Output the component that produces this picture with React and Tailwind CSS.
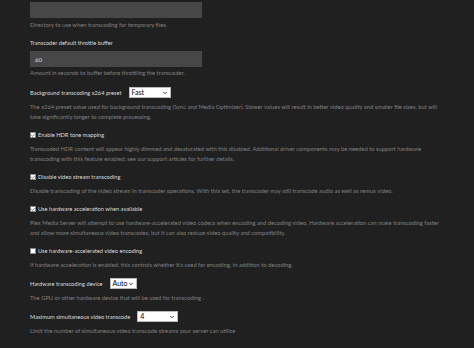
import { ChevronDown, Check } from "lucide-react";

const font = { fontFamily: 'Lato, "Noto Sans", sans-serif' };

function Select({ value, width }) {
  return (
    <div className={`ml-[7px] h-[11px] ${width} bg-white flex items-center justify-between px-[2px] border border-[#bbb]`}>
      <span className="text-[7px] leading-none text-black">{value}</span>
      <ChevronDown className="w-[6px] h-[6px] text-black" strokeWidth={3} />
    </div>
  );
}

function Box({ checked }) {
  return (
    <span className="w-[6px] h-[6px] mr-[2px] bg-white flex items-center justify-center border border-[#888]">
      {checked && <Check className="w-[5px] h-[5px] text-[#333]" strokeWidth={4} />}
    </span>
  );
}

function Desc({ children }) {
  return <p className="text-[5.8px] leading-[10px] text-[#808080]">{children}</p>;
}

function Label({ children }) {
  return <div className="text-[5.7px] leading-[10px] text-[#dcdcdc]">{children}</div>;
}

const checks = [
  {
    label: "Enable HDR tone mapping",
    checked: true,
    desc: "Transcoded HDR content will appear highly dimmed and desaturated with this disabled. Additional driver components may be needed to support hardware transcoding with this feature enabled; see our support articles for further details.",
  },
  {
    label: "Disable video stream transcoding",
    checked: true,
    desc: "Disable transcoding of the video stream in transcoder operations. With this set, the transcoder may still transcode audio as well as remux video.",
  },
  {
    label: "Use hardware acceleration when available",
    checked: true,
    desc: "Plex Media Server will attempt to use hardware-accelerated video codecs when encoding and decoding video. Hardware acceleration can make transcoding faster and allow more simultaneous video transcodes, but it can also reduce video quality and compatibility.",
  },
  {
    label: "Use hardware-accelerated video encoding",
    checked: false,
    desc: "If hardware acceleration is enabled, this controls whether it's used for encoding, in addition to decoding.",
  },
];

export default function App() {
  return (
    <div className="w-[474px] h-[348px] overflow-hidden bg-[#202020]" style={font}>
      <div className="pl-[30px] pr-[34px] pt-[2px]">
        <div className="w-[172px] h-[16px] bg-[#474747]" />
        <div className="mt-[2px]">
          <Desc>Directory to use when transcoding for temporary files.</Desc>
        </div>

        <div className="mt-[8px]">
          <Label>Transcoder default throttle buffer</Label>
          <div className="mt-[3px] w-[172px] h-[16px] bg-[#474747] flex items-center px-[5px]">
            <span className="text-[6px] text-[#ddd]">60</span>
          </div>
          <div className="mt-[1px]">
            <Desc>Amount in seconds to buffer before throttling the transcoder.</Desc>
          </div>
        </div>

        <div className="mt-[9px]">
          <div className="flex items-center h-[11px]">
            <Label>Background transcoding x264 preset</Label>
            <Select value="Fast" width="w-[42px]" />
          </div>
          <div className="mt-[4px]">
            <Desc>
              The x264 preset value used for background transcoding (Sync and Media Optimizer). Slower values will result in better video quality and smaller file sizes, but will take significantly longer to complete processing.
            </Desc>
          </div>
        </div>

        {checks.map((c, i) => (
          <div key={i} className="mt-[8px]">
            <div className="flex items-center">
              <Box checked={c.checked} />
              <Label>{c.label}</Label>
            </div>
            <div className="mt-[4px]">
              <Desc>{c.desc}</Desc>
            </div>
          </div>
        ))}

        <div className="mt-[8px]">
          <div className="flex items-center h-[11px]">
            <Label>Hardware transcoding device</Label>
            <Select value="Auto" width="w-[27px]" />
          </div>
          <div className="mt-[4px]">
            <Desc>The GPU or other hardware device that will be used for transcoding .</Desc>
          </div>
        </div>

        <div className="mt-[8px]">
          <div className="flex items-center h-[11px]">
            <Label>Maximum simultaneous video transcode</Label>
            <Select value="4" width="w-[41px]" />
          </div>
          <div className="mt-[4px]">
            <Desc>Limit the number of simultaneous video transcode streams your server can utilize</Desc>
          </div>
        </div>
      </div>
    </div>
  );
}
